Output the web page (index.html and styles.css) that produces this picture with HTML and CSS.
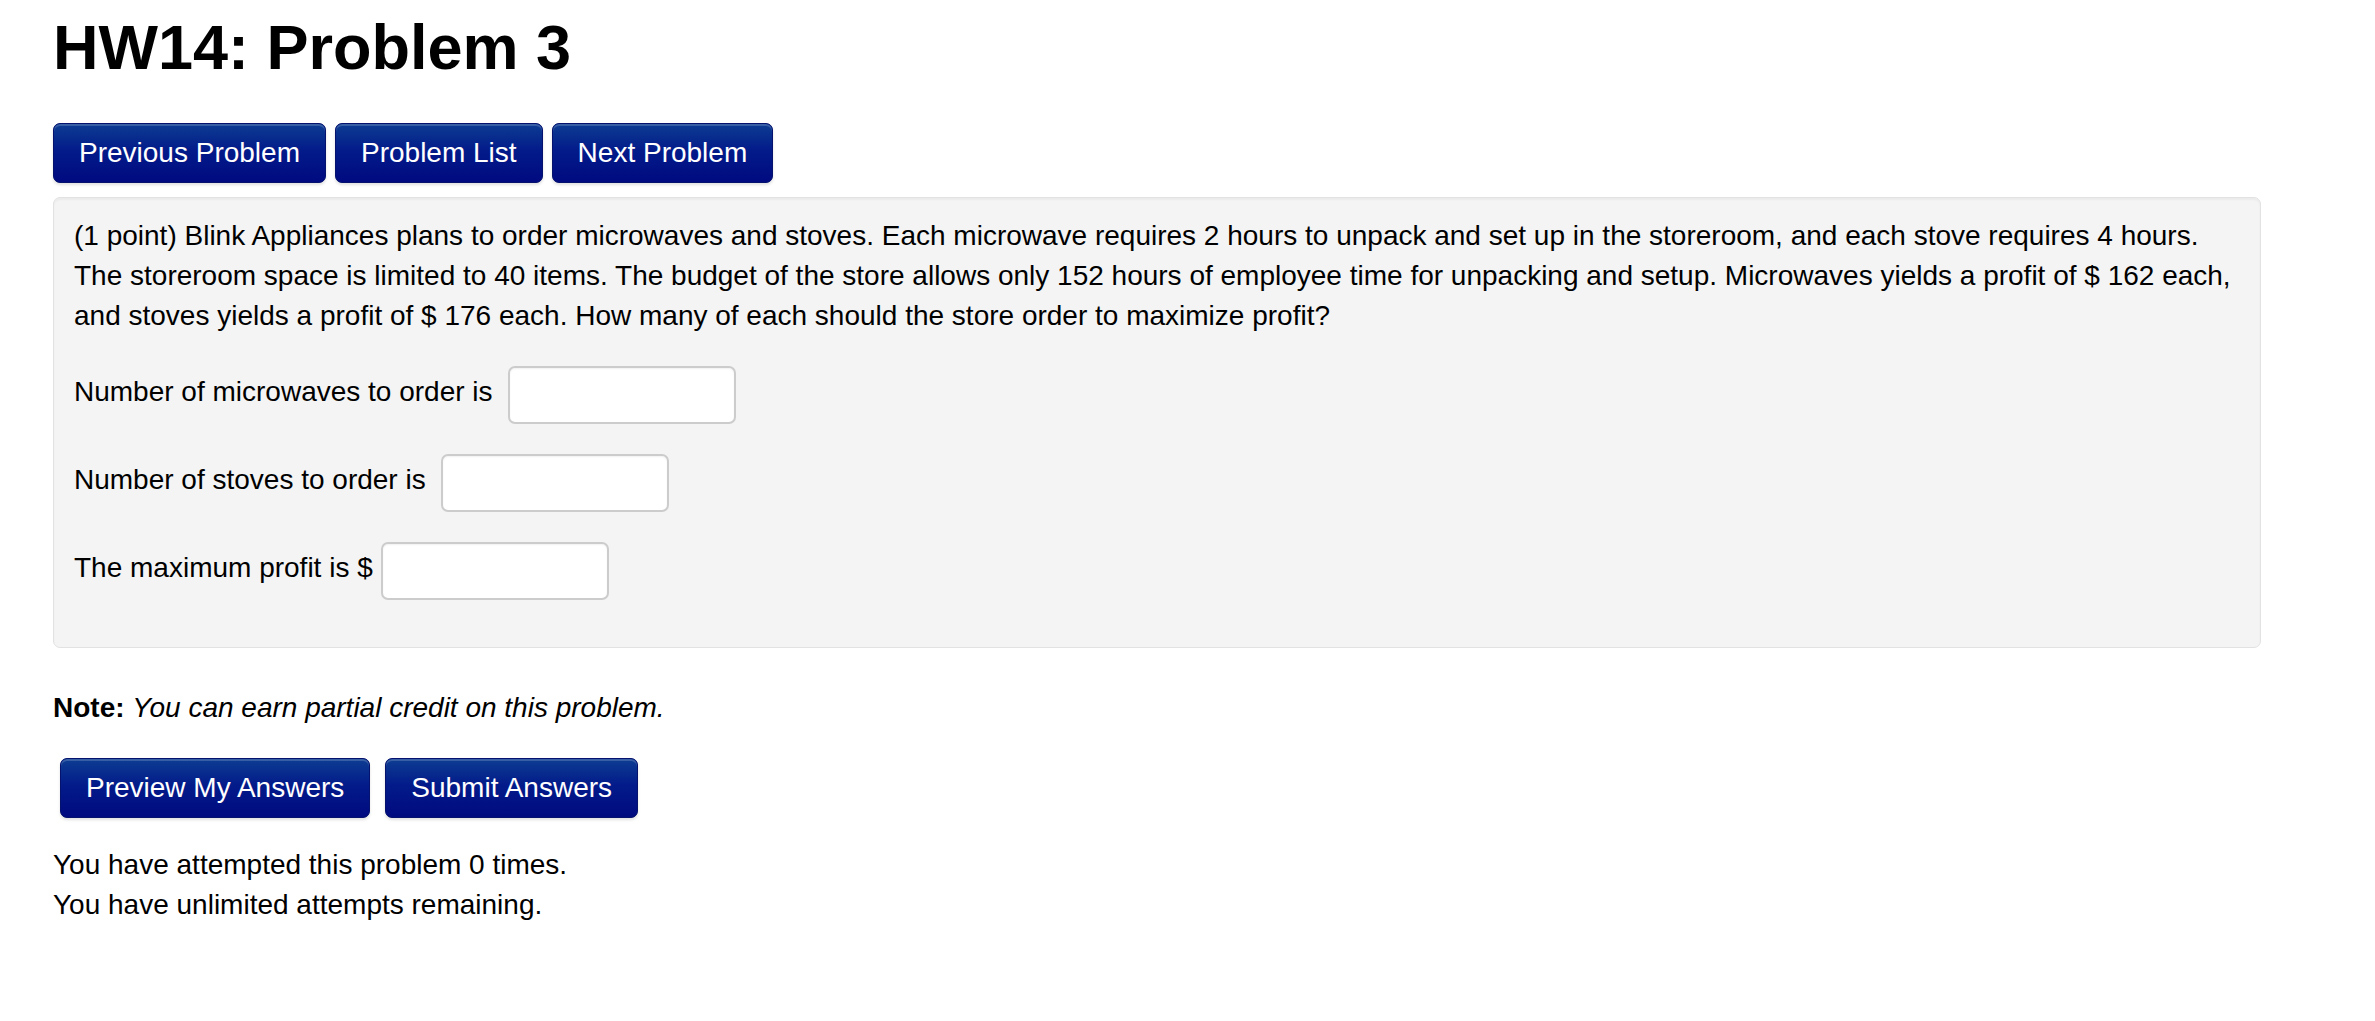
FILE: index.html
```html
<!DOCTYPE html>
<html lang="en">
<head>
<meta charset="utf-8">
<title>HW14: Problem 3</title>
<link rel="stylesheet" href="styles.css">
</head>
<body>
<div class="page">
  <h1 class="title">HW14: Problem 3</h1>
  <nav class="nav-buttons">
    <button class="btn" type="button">Previous Problem</button>
    <button class="btn" type="button">Problem List</button>
    <button class="btn" type="button">Next Problem</button>
  </nav>
  <div class="well">
    <p class="problem-text">(1 point) Blink Appliances plans to order microwaves and stoves. Each microwave requires 2 hours to unpack and set up in the storeroom, and each stove requires 4 hours.<br>The storeroom space is limited to 40 items. The budget of the store allows only 152 hours of employee time for unpacking and setup. Microwaves yields a profit of $ 162 each,<br>and stoves yields a profit of $ 176 each. How many of each should the store order to maximize profit?</p>
    <div class="answer-row"><span class="answer-label">Number of microwaves to order is&nbsp;&nbsp;</span><input class="answer" type="text"></div>
    <div class="answer-row"><span class="answer-label">Number of stoves to order is&nbsp;&nbsp;</span><input class="answer" type="text"></div>
    <div class="answer-row"><span class="answer-label">The maximum profit is $&nbsp;</span><input class="answer" type="text"></div>
  </div>
  <p class="note"><b>Note:</b> <i>You can earn partial credit on this problem.</i></p>
  <div class="submit-buttons">
    <button class="btn" type="button">Preview My Answers</button>
    <button class="btn" type="button">Submit Answers</button>
  </div>
  <p class="attempts">You have attempted this problem 0 times.<br>You have unlimited attempts remaining.</p>
</div>
</body>
</html>
```

FILE: styles.css
```css
html, body {
  margin: 0;
  padding: 0;
  background: #ffffff;
}

body {
  font-family: "Liberation Sans", Arial, sans-serif;
  font-size: 28px;
  line-height: 40px;
  color: #000000;
}

.page {
  width: 2208px;
  padding-left: 53px;
  padding-top: 11px;
}

.title {
  margin: 0;
  font-size: 63px;
  line-height: 72px;
  font-weight: bold;
  color: #000000;
}

.nav-buttons {
  display: flex;
  gap: 9px;
  margin-top: 40px;
}

.btn {
  height: 60px;
  padding: 0 25px;
  font-family: "Liberation Sans", Arial, sans-serif;
  font-size: 28px;
  line-height: 58px;
  color: #ffffff;
  background-color: #00148a;
  background-image: linear-gradient(to bottom, #0d3d92 0%, #031b8a 45%, #000a80 100%);
  border: 1px solid #05136e;
  border-radius: 7px;
  box-shadow: inset 0 2px 0 rgba(255, 255, 255, 0.18), 0 2px 3px rgba(0, 0, 0, 0.12);
  cursor: pointer;
}

.well {
  margin-top: 14px;
  padding: 18px 12px 47px 20px;
  background: #f4f4f4;
  border: 1px solid #e2e2e2;
  border-radius: 7px;
  box-shadow: inset 0 2px 2px rgba(0, 0, 0, 0.04);
}

.problem-text {
  margin: 0 0 30px 0;
  white-space: nowrap;
}

.answer-row {
  display: flex;
  align-items: center;
  height: 58px;
  margin-bottom: 30px;
}

.answer-row:last-child {
  margin-bottom: 0;
}

.answer-label {
  padding-bottom: 6px;
  white-space: pre;
}

.answer {
  box-sizing: border-box;
  width: 228px;
  height: 58px;
  margin: 0;
  padding: 6px 10px;
  font-family: "Liberation Sans", Arial, sans-serif;
  font-size: 28px;
  background: #ffffff;
  border: 2px solid #cccccc;
  border-radius: 7px;
  box-shadow: inset 0 1px 2px rgba(0, 0, 0, 0.06);
}

.note {
  margin: 40px 0 0 0;
}

.submit-buttons {
  display: flex;
  gap: 15px;
  margin-top: 30px;
  padding-left: 7px;
}

.attempts {
  margin: 27px 0 0 0;
}
```
